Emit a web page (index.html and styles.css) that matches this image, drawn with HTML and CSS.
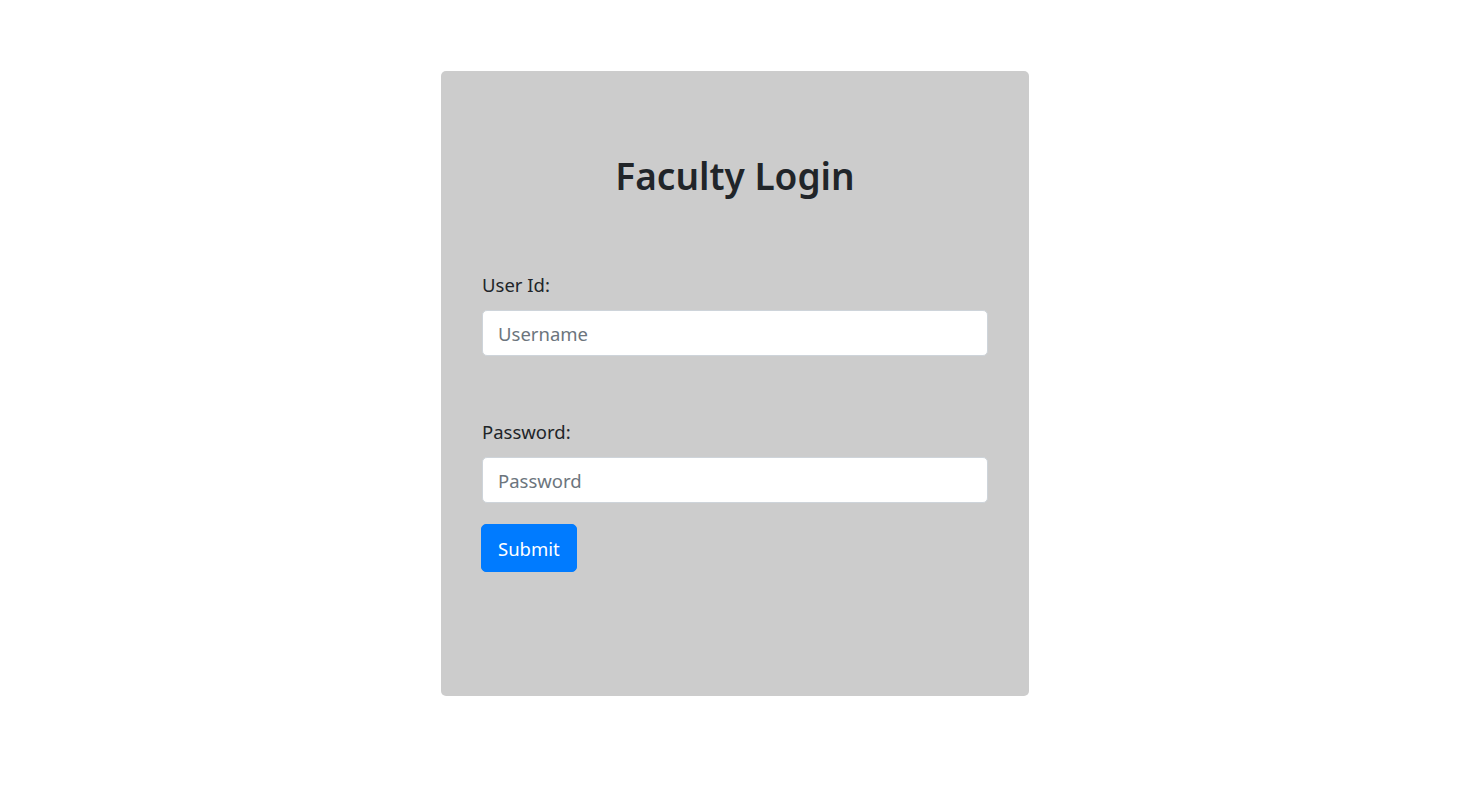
FILE: index.html
```html
<!DOCTYPE html>
<html lang="en">
<head>
<meta charset="utf-8">
<title>Faculty Login</title>
<link rel="stylesheet" href="styles.css">
</head>
<body>
<main class="page">
  <div class="card">
    <h2 class="title">Faculty Login</h2>
    <form class="form">
      <div class="group group-user">
        <label class="label" for="uid">User Id:</label>
        <input class="control" id="uid" type="text" placeholder="Username">
      </div>
      <div class="group">
        <label class="label" for="pwd">Password:</label>
        <input class="control" id="pwd" type="password" placeholder="Password">
      </div>
      <button class="btn" type="submit">Submit</button>
    </form>
  </div>
</main>
</body>
</html>
```

FILE: styles.css
```css
html, body {
  margin: 0;
  padding: 0;
  background: #fff;
}
body {
  font-family: "Noto Sans", "Open Sans", sans-serif;
  color: #212529;
  font-size: 20px;
  line-height: 1.5;
}
.page {
  display: flex;
  justify-content: center;
  padding-top: 71px;
}
.card {
  box-sizing: border-box;
  width: 588px;
  height: 625px;
  background: #cccccc;
  border-radius: 5px;
  padding: 0 41px;
}
.title {
  margin: 81px 0 70px;
  text-align: center;
  font-size: 37px;
  font-weight: 600;
  line-height: 48px;
  color: #212529;
}
.form {
  display: flex;
  flex-direction: column;
  align-items: flex-start;
}
.group {
  display: flex;
  flex-direction: column;
  align-self: stretch;
  margin-bottom: 21px;
}
.group-user {
  margin-bottom: 61px;
}
.label {
  display: block;
  font-size: 18.5px;
  line-height: 30px;
  margin: 0 0 10px;
}
.control {
  box-sizing: border-box;
  height: 46px;
  width: 100%;
  padding: 0 15px;
  font-family: inherit;
  font-size: 18.5px;
  color: #495057;
  background: #fff;
  border: 1px solid #ced4da;
  border-radius: 5px;
  outline: none;
}
.control::placeholder {
  color: #6c757d;
  opacity: 1;
}
.btn {
  box-sizing: border-box;
  height: 48px;
  margin-left: -1px;
  padding: 0 16px;
  font-family: inherit;
  font-size: 18.5px;
  color: #fff;
  background: #007bff;
  border: 1px solid #007bff;
  border-radius: 5px;
  cursor: pointer;
}
```
